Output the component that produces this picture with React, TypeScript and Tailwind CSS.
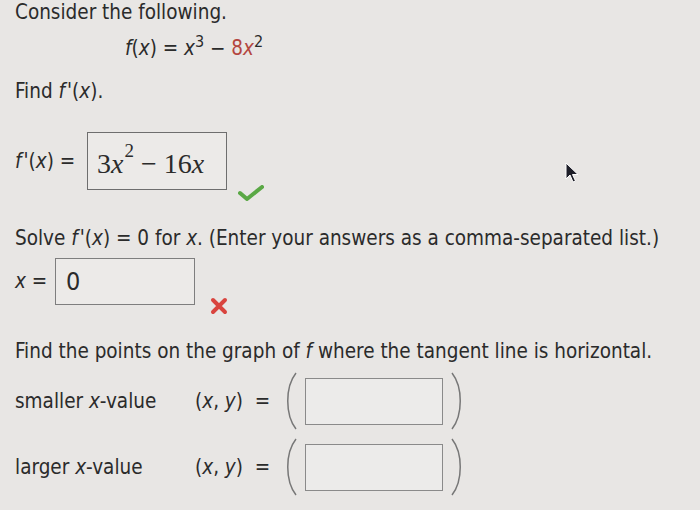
import React from 'react';

const sans = { fontFamily: '"DejaVu Sans Condensed", "DejaVu Sans", sans-serif' };

const Paren = ({ side }: { side: 'l' | 'r' }) => (
  <svg width="16" height="58" viewBox="0 0 16 58" className="shrink-0">
    <path
      d={side === 'l' ? 'M13 1 C2 15 2 43 13 57' : 'M3 1 C14 15 14 43 3 57'}
      fill="none"
      stroke="#777"
      strokeWidth="1.5"
    />
  </svg>
);

const Check = () => (
  <svg width="26" height="16" viewBox="0 0 26 16">
    <path d="M2 8 L9 14 L24 2" fill="none" stroke="#5aa845" strokeWidth="4" strokeLinecap="round" strokeLinejoin="round" />
  </svg>
);

const Cross = () => (
  <svg width="18" height="18" viewBox="0 0 18 18">
    <path d="M3 3 L15 15 M15 3 L3 15" stroke="#d9443e" strokeWidth="4" strokeLinecap="round" />
  </svg>
);

const Fp = () => (
  <>
    <i>f</i>
    <span className="ml-[2px]">'</span>(<i>x</i>)
  </>
);

const PointRow = ({ label, className }: { label: string; className: string }) => (
  <div className={`flex items-center ${className}`}>
    <div className="w-[180px]">{label.split('x')[0]}<i>x</i>{label.split('x')[1]}</div>
    <div className="w-[88px]">(<i>x</i>, <i>y</i>) &nbsp;=</div>
    <Paren side="l" />
    <div className="w-[138px] h-[47px] mx-[6px] border border-[#8a8a8a] bg-[#ecebea]" />
    <Paren side="r" />
  </div>
);

export default function App() {
  return (
    <div className="relative w-[700px] h-[510px] overflow-hidden bg-[#e8e6e4] text-[#2b2b2b] text-[20.5px] leading-none pl-[15px]" style={sans}>
      <div className="pt-[2px] h-[25px]">Consider the following.</div>

      <div className="mt-[13px] ml-[110px] h-[24px]">
        <i>f</i>(<i>x</i>) = <i>x</i><sup className="text-[16px]">3</sup> − <span className="text-[#b4473f]">8<i>x</i></span><sup className="text-[16px]">2</sup>
      </div>

      <div className="mt-[19px] h-[24px]">Find <Fp />.</div>

      <div className="mt-[27px] flex items-center h-[58px]">
        <div className="w-[72px]"><Fp /> =</div>
        <div className="w-[140px] h-[58px] border-[1.5px] border-[#6e6e6e] bg-[#eceae8] flex items-center pl-[9px] pt-[6px] text-[28px]" style={{ fontFamily: '"Liberation Serif", serif' }}>
          3<i>x</i><span className="relative -top-[14px] text-[19px] ml-[1px]">2</span>&nbsp;− 16<i>x</i>
        </div>
      </div>
      <div className="ml-[223px] -mt-[5px] h-[16px]"><Check /></div>

      <div className="mt-[27px] h-[24px]">Solve <Fp /> = 0 for <i>x</i>. (Enter your answers as a comma-separated list.)</div>

      <div className="mt-[6px] flex items-center h-[47px]">
        <div className="w-[40px]"><i>x</i> =</div>
        <div className="w-[140px] h-[47px] border border-[#7e7e7e] bg-[#eceae8] flex items-center pl-[10px] text-[25px]">0</div>
      </div>
      <div className="ml-[195px] -mt-[8px] h-[18px]"><Cross /></div>

      <div className="mt-[26px] h-[24px]">Find the points on the graph of <i>f</i> where the tangent line is horizontal.</div>

      <PointRow label="smaller x-value" className="mt-[7px] h-[58px]" />
      <PointRow label="larger x-value" className="mt-[8px] h-[58px]" />

      <svg className="absolute left-[565px] top-[162px]" width="14" height="22" viewBox="0 0 14 22">
        <path d="M1 1 L1 17 L5 13 L8 20 L10.5 19 L7.5 12.5 L13 12.5 Z" fill="#1e1e28" stroke="#fff" strokeWidth="1" />
      </svg>
    </div>
  );
}
